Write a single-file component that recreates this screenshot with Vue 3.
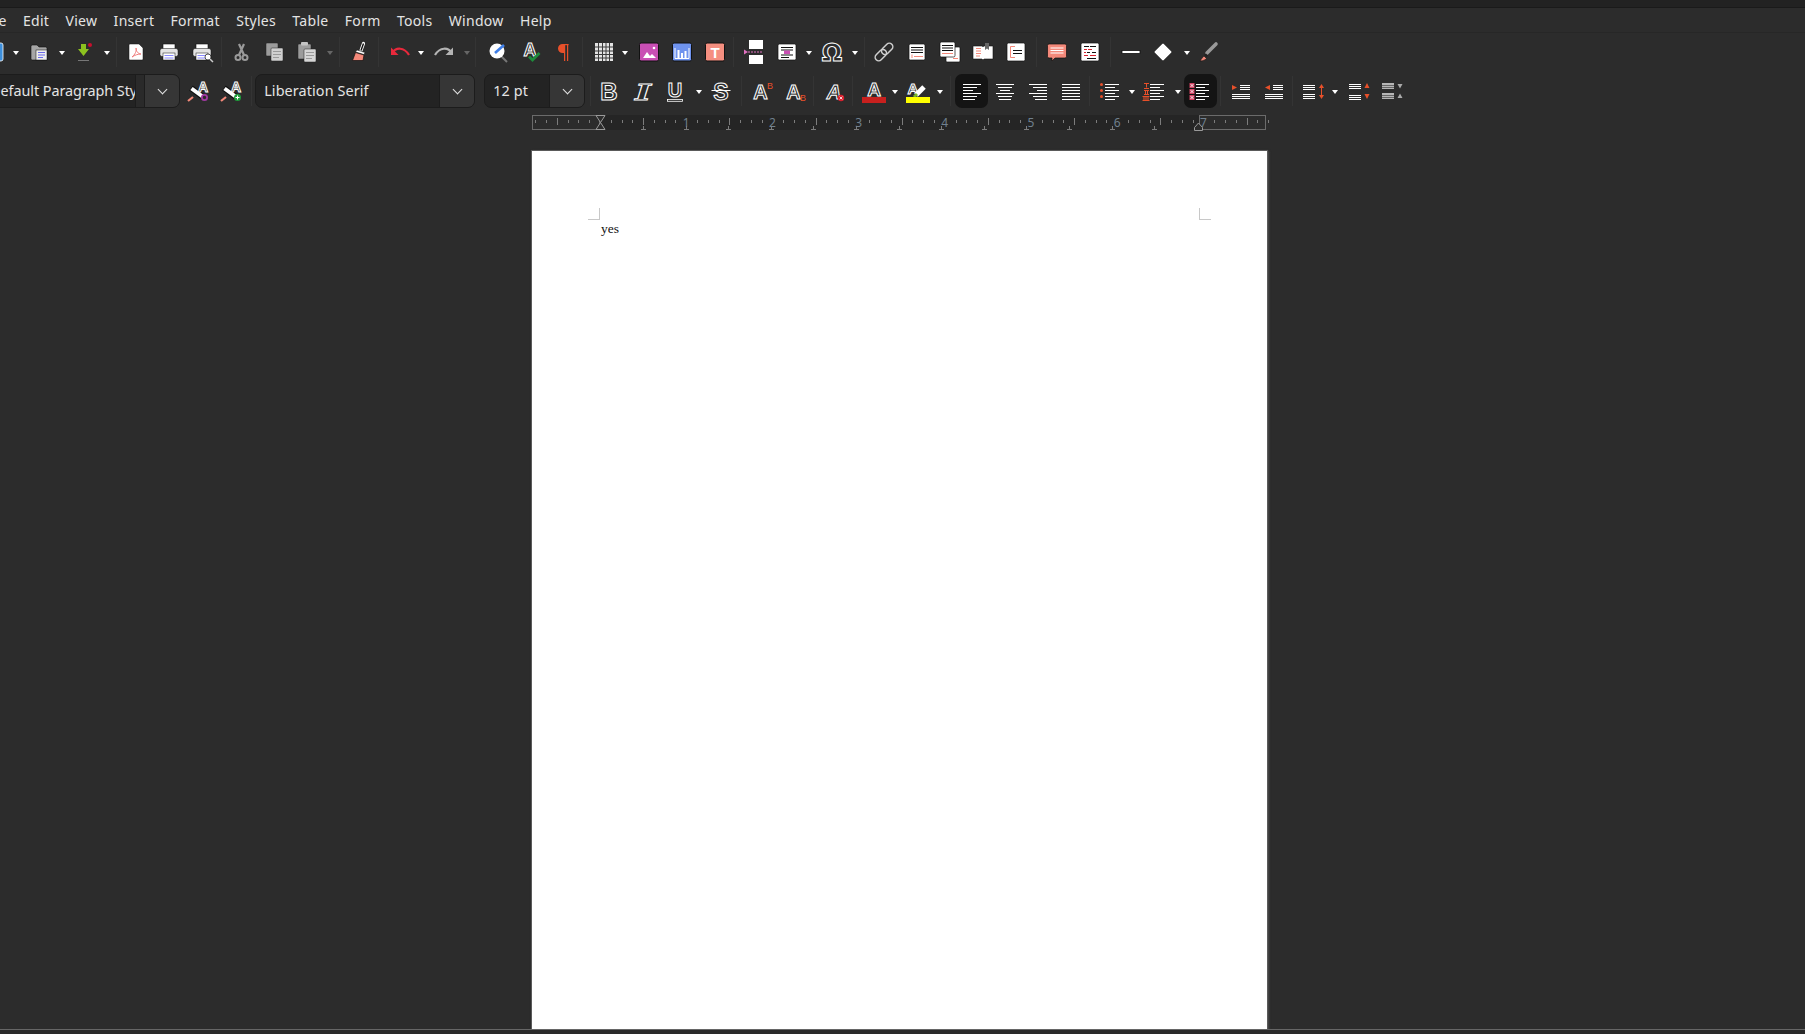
<script setup>
const menus = ['File', 'Edit', 'View', 'Insert', 'Format', 'Styles', 'Table', 'Form', 'Tools', 'Window', 'Help']

const row1 = ['save', 'dd', 'open', 'dd', 'download', 'dd', 'sep', 'pdf', 'print', 'preview', 'sep', 'cut', 'copy', 'paste', 'dim', 'sep', 'clone', 'sep', 'undo', 'dd', 'redo', 'dim', 'sep', 'find', 'spell', 'pilcrow', 'sepw', 'table', 'dd', 'image', 'chart', 'textbox', 'sep', 'pagebreak', 'field', 'dd', 'omega', 'dd', 'sep', 'link', 'footnote', 'endnote', 'bookmark', 'crossref', 'sepw', 'comment', 'track', 'sepw', 'line', 'diamond', 'dd', 'brush']
const row2a = ['updatestyle', 'newstyle', 'sep']
const row2b = ['sep', 'bold', 'italic', 'underline', 'dd', 'strike', 'sep', 'sup', 'sub', 'sep', 'clear', 'sep', 'fontcolor', 'dd', 'highlight', 'dd', 'sepw', 'alignleft', 'aligncenter', 'alignright', 'justify', 'sep', 'bullets', 'dd', 'numbers', 'dd', 'checklist', 'sep', 'indent', 'outdent', 'sep', 'spacing', 'dd', 'parainc', 'paradec']
const activeItems = ['alignleft', 'checklist']

// small helpers for building the toolbar svg strings
const bars = (list, color = '#fff', h = 1) =>
  list.map(([x, y, w]) => `<rect x="${x}" y="${y}" width="${w}" height="${h}" fill="${color}"/>`).join('')
const letter = (ch, x, y, size, extra = '') =>
  `<text x="${x}" y="${y}" text-anchor="middle" font-family="Liberation Sans" font-weight="700" font-size="${size}" fill="#2c2c2c" stroke="#fff" stroke-width="1" ${extra}>${ch}</text>`
const sheet = (x, y, w, h) =>
  `<rect x="${x}" y="${y}" width="${w}" height="${h}" rx="1.5" fill="#fff" stroke="#111" stroke-width=".7"/>`
const printer = `<rect x="6" y="4" width="12" height="6" fill="#fff" stroke="#111" stroke-width=".6"/><rect x="3" y="8.5" width="18" height="8" rx="2" fill="#e4e4e4" stroke="#111" stroke-width=".5"/><rect x="6" y="13" width="12" height="7" fill="#fff" stroke="#111" stroke-width=".5"/>` + bars([[7.5, 15, 9], [7.5, 17.5, 9]], '#8a8aff')
const roller = `<path d="M4 9l12 9" stroke="#111" stroke-width="6"/><path d="M4.5 9.5l11 8" stroke="#fff" stroke-width="4"/><path d="M1 22l5-4" stroke="#f4897a" stroke-width="2.2"/>` + letter('A', 16, 13, 14)
const textLines = bars([[3, 15, 18], [3, 17, 18], [3, 19, 18], [11, 6, 10], [11, 8, 10], [11, 10, 10]])

const icons = {
  save: `<rect x="3" y="3" width="19" height="18" rx="2" fill="#3d8fdc" stroke="#fff" stroke-width=".8"/>`,
  open: `<path d="M4 6.5A1.5 1.5 0 0 1 5.5 5H10l2 2h6.5A1.5 1.5 0 0 1 20 8.500V20H5.500A1.500 1.500 0 0 1 4 18.500z" fill="#a6a6a6" stroke="#111" stroke-width=".6"/><rect x="9" y="10" width="11" height="10" fill="#eee" stroke="#111" stroke-width=".5"/>` + bars([[11, 12, 7], [11, 14.500, 7], [11, 17, 5]], '#6a6ae8'),
  download: `<path d="M9 4h5v5h3l-5.500 7L6 9h3z" fill="#8dc21f"/><rect x="6" y="20" width="11" height="1" fill="#777"/><circle cx="18" cy="5" r="2" fill="#c8102e"/>`,
  pdf: `<path d="M5 5a1 1 0 0 1 1-1h9l4 4v11a1 1 0 0 1-1 1H6a1 1 0 0 1-1-1z" fill="#fff" stroke="#111" stroke-width=".5"/><path d="M8 17c3-2 5-7 4-9 0 3 2 6 5 6-3 0-6 1-9 3z" fill="none" stroke="#f08080"/>`,
  print: printer,
  preview: printer + `<circle cx="18" cy="17" r="3" fill="#fff" stroke="#111" stroke-width=".7"/><path d="M20 19l3 3" stroke="#ccc" stroke-width="1.500"/>`,
  cut: `<circle cx="9" cy="17.500" r="2.500" fill="none" stroke="#9a9a9a" stroke-width="2"/><circle cx="16" cy="17.500" r="2.500" fill="none" stroke="#9a9a9a" stroke-width="2"/><path d="M15 4l-5 11M10 4l5 11" stroke="#9a9a9a" stroke-width="2.200"/>`,
  copy: `<rect x="4" y="3" width="12" height="13" rx="1" fill="#9c9c9c" stroke="#222" stroke-width=".5"/><rect x="9" y="8" width="12" height="13" rx="1" fill="#d0d0d0" stroke="#222" stroke-width=".5"/>` + bars([[11, 11, 8], [11, 14, 8], [11, 17, 6]], '#999'),
  paste: `<rect x="3" y="4" width="13" height="15" rx="1" fill="#9c9c9c" stroke="#222" stroke-width=".5"/><rect x="6" y="2" width="7" height="3.500" rx="1" fill="#c4c4c4"/><rect x="9" y="9" width="12" height="13" rx="1" fill="#d6d6d6" stroke="#222" stroke-width=".5"/>` + bars([[11, 12, 8], [11, 15, 8], [11, 18, 6]], '#999'),
  clone: `<path d="M16.500 3.500l-2.500 7" stroke="#fff" stroke-width="3.200" stroke-linecap="round"/><path d="M16.500 3.500l-2.500 7" stroke="#111" stroke-width="1.400"/><path d="M10 10l8 2.500-1 2-8.500-2.500z" fill="#fff" stroke="#111" stroke-width=".5"/><path d="M8.500 12.500l8.500 2.500-1 5.500H5.500z" fill="#f4897a" stroke="#111" stroke-width=".7"/>`,
  undo: `<path d="M4 13c4-6 12-6 17 2" fill="none" stroke="#e8293c" stroke-width="2.200"/><path d="M3 7.500V15h7.500z" fill="#e8293c"/>`,
  redo: `<path d="M20 13c-4-6-12-6-17 2" fill="none" stroke="#b4b4b4" stroke-width="2.200"/><path d="M21 7.500V15h-7.500z" fill="#b4b4b4"/>`,
  find: `<path d="M15 16l6 6" stroke="#777" stroke-width="2"/><circle cx="11" cy="11" r="7.500" fill="#fff"/><path d="M9 13l9-8" stroke="#3f7fe8" stroke-width="2.600"/>`,
  spell: letter('A', 11, 16, 18) + `<path d="M10 16.500l3.500 3.500 7-7" fill="none" stroke="#1e8a3c" stroke-width="2.800"/>`,
  pilcrow: `<path d="M12 4h-1.500a4.500 4.500 0 0 0 0 9H12z" fill="#e8502a"/><rect x="11.500" y="4" width="5" height="1.200" fill="#e8502a"/><rect x="12" y="4" width="1.200" height="17" fill="#e8502a"/><rect x="15" y="4" width="1.200" height="17" fill="#e8502a"/>`,
  table: `<rect x="3" y="3" width="18" height="18" fill="#e4e4e4"/>` + bars([[3, 6.500, 18], [3, 10.500, 18], [3, 14, 18], [3, 17.500, 18]], '#3a3a3a') + `<path d="M6.500 3v18M10.500 3v18M14 3v18M17.500 3v18" stroke="#3a3a3a"/>`,
  image: `<rect x="2.500" y="3" width="19" height="18" rx="1.500" fill="#c94fb4" stroke="#111"/><path d="M6 18l4-6 3 4 2-2 4 4z" fill="#fff"/><circle cx="17" cy="8" r="1.300" fill="#fff"/>`,
  chart: `<rect x="2.500" y="3" width="19" height="18" rx="1.500" fill="#6f93ee" stroke="#111"/><path d="M5 8V18.500H19V8" fill="none" stroke="#fff"/><rect x="7.500" y="10" width="2" height="8" fill="#fff"/><rect x="11" y="13" width="2" height="5" fill="#fff"/><rect x="14.500" y="11" width="2" height="7" fill="#fff"/>`,
  textbox: `<rect x="2.500" y="3" width="19" height="18" rx="1.500" fill="#f58f80" stroke="#111"/><text x="12" y="17.500" text-anchor="middle" font-family="Liberation Sans" font-weight="700" font-size="15" fill="#fff">T</text>`,
  pagebreak: `<rect x="8" y="0" width="14" height="9" fill="#fff"/><rect x="8" y="15" width="14" height="9" fill="#fff"/><path d="M7 12h15" stroke="#e070c0" stroke-dasharray="2 1"/><path d="M3 9.500v5l4-2.500z" fill="#e070c0"/>`,
  field: sheet(3, 4, 18, 16) + bars([[6, 7, 12], [6, 9.500, 12], [6, 14.500, 12], [6, 17, 8]], '#111') + `<rect x="9" y="10.500" width="6" height="3.500" fill="#c94fb4"/>`,
  omega: `<text x="12" y="20.500" text-anchor="middle" font-family="DejaVu Sans" font-weight="700" font-size="24" fill="#2c2c2c" stroke="#fff" stroke-width="1">Ω</text>`,
  link: `<g transform="rotate(-45 12 12)" fill="none" stroke="#cfcfcf" stroke-width="1.500"><rect x="1" y="8.500" width="13" height="7" rx="3.500"/><rect x="10" y="8.500" width="13" height="7" rx="3.500"/></g>`,
  footnote: sheet(4, 4, 16, 16) + bars([[6, 7, 12], [6, 9.500, 12], [6, 12, 12]], '#111') + bars([[9, 16, 9]], '#f4897a') + bars([[6.500, 14.500, 1]], '#f4897a', 3.500),
  endnote: `<rect x="8" y="7" width="14" height="15" rx="1" fill="#fff" stroke="#111" stroke-width=".7"/>` + bars([[15, 18, 5]], '#f4897a') + sheet(2, 2, 15, 15) + bars([[4, 5, 11], [4, 7.500, 11], [4, 10, 11]], '#111') + bars([[4, 13, 11]], '#f4897a'),
  bookmark: `<path d="M2 6h9.500l.5 1 .5-1H22v13H13l-1 1-1-1H2z" fill="#fff" stroke="#111" stroke-width=".6"/><path d="M14 3h4v7l-2-1.500-2 1.500z" fill="#666"/>` + bars([[5, 8, 5], [5, 10.500, 5], [5, 13, 5], [5, 15.500, 4]], '#f4897a'),
  crossref: sheet(3, 3, 18, 18) + `<path d="M11 6.500H6.500v11H11" fill="none" stroke="#f4897a"/>` + bars([[9, 10, 9], [9, 13, 9]], '#111'),
  comment: `<path d="M4 4h16a1.500 1.500 0 0 1 1.500 1.500v11A1.500 1.500 0 0 1 20 18H10l-3 3v-3H4a1.500 1.500 0 0 1-1.500-1.500v-11A1.500 1.500 0 0 1 4 4z" fill="#f4897a" stroke="#111" stroke-width=".7"/>` + bars([[5.500, 7.500, 13], [5.500, 10, 13], [5.500, 12.500, 13]]),
  track: sheet(3, 3, 18, 18) + bars([[6, 6, 5], [12, 6, 6], [9, 12, 3], [14, 12, 4], [9, 18, 9]], '#111') + bars([[6, 9, 3], [10, 9, 4], [6, 12, 2], [6, 15, 4], [12, 15, 6]], '#d8202e'),
  line: `<rect x="3" y="10.500" width="18" height="3" fill="#fff" stroke="#111" stroke-width=".8"/>`,
  diamond: `<rect x="5.500" y="5.500" width="13" height="13" rx="1" fill="#fff" stroke="#111" stroke-width=".6" transform="rotate(45 12 12)"/>`,
  brush: `<path d="M11 13L20 4" stroke="#9a9a9a" stroke-width="3.600" stroke-linecap="round"/><path d="M4 21c2-3 3-4 4-5l2.500 2.500c-1 1-3 2.500-6.500 2.500z" fill="#f4897a" stroke="#111" stroke-width=".6"/><path d="M8 15l2.500 2.500 1.500-2-2-2z" fill="#222"/>`,

  updatestyle: roller + `<circle cx="17.500" cy="18.500" r="2.600" fill="none" stroke="#a03aa0" stroke-width="1.800"/>`,
  newstyle: roller + `<circle cx="17.500" cy="18.500" r="3.500" fill="#1e9e3c"/><path d="M15.500 18.500h4M17.500 16.500v4" stroke="#fff"/>`,
  bold: letter('B', 12, 21, 24),
  italic: `<text transform="translate(12 21) scale(1.500 1)" text-anchor="middle" font-family="DejaVu Serif" font-style="italic" font-weight="700" font-size="23" fill="#2c2c2c" stroke="#fff" stroke-width=".8">I</text>`,
  underline: letter('U', 12, 18, 20) + `<rect x="4.500" y="20.500" width="15" height="1.800" fill="#2c2c2c" stroke="#fff" stroke-width=".8"/>`,
  strike: letter('S', 12, 20.500, 23) + `<rect x="2.500" y="11" width="19" height="1" fill="#fff"/>`,
  sup: letter('A', 10.500, 20, 20) + `<text x="20" y="10" text-anchor="middle" font-family="Liberation Sans" font-size="9" fill="#e8502a">B</text>`,
  sub: letter('A', 9.500, 20, 20) + `<text x="19" y="22" text-anchor="middle" font-family="Liberation Sans" font-size="9" fill="#e8502a">B</text>`,
  clear: `<text x="11" y="20" text-anchor="middle" font-family="Liberation Sans" font-style="italic" font-weight="700" font-size="20" fill="#2c2c2c" stroke="#fff" stroke-width="1">A</text><circle cx="18" cy="19" r="3.200" fill="#d8202e"/><path d="M16.600 17.600l2.800 2.800M19.400 17.600l-2.800 2.800" stroke="#fff" stroke-width=".8"/>`,
  fontcolor: letter('A', 12, 17, 19) + `<rect x="0" y="18" width="24" height="6" fill="#c8201e"/>`,
  highlight: letter('A', 7, 15, 15) + `<path d="M10 16l8-8" stroke="#fff" stroke-width="5"/><path d="M8 18l3-3" stroke="#78b42a" stroke-width="3"/><rect x="0" y="18" width="24" height="6" fill="#ffff00"/>`,
  alignleft: bars([[4, 5, 18], [4, 8, 14], [4, 11, 10], [4, 14, 18], [4, 17, 14], [4, 20, 12]]),
  aligncenter: bars([[4, 5, 18], [6, 8, 14], [8, 11, 10], [4, 14, 18], [6, 17, 14], [7, 20, 12]]),
  alignright: bars([[4, 5, 18], [8, 8, 14], [12, 11, 10], [4, 14, 18], [8, 17, 14], [10, 20, 12]]),
  justify: bars([[4, 5, 18], [4, 8, 18], [4, 11, 18], [4, 14, 18], [4, 17, 18], [4, 20, 18]]),
  bullets: bars([[8, 5, 14], [8, 8, 10], [8, 11, 14], [8, 14, 10], [8, 17, 14], [8, 20, 10]]) + [5, 11, 17].map((y) => `<circle cx="4.500" cy="${y + .5}" r="1.500" fill="#e8502a"/>`).join(''),
  numbers: bars([[9, 5, 14], [9, 8, 10], [9, 11, 14], [9, 14, 10], [9, 17, 14], [9, 20, 10]]) +
    bars([[3, 4, 5], [3, 9, 5], [3, 11, 5], [3, 15, 5], [1.500, 17, 7], [1.500, 21, 7]], '#e8502a') +
    bars([[5, 4, 1], [4, 11, 1], [6, 11, 1], [2.500, 17, 1], [4.500, 17, 1], [6.500, 17, 1]], '#e8502a', 4.500),
  checklist: bars([[9, 5, 13], [9, 8, 9], [9, 11, 13], [9, 14, 9], [9, 17, 13], [9, 20, 9]]) +
    [4, 10, 16].map((y) => `<rect x="2.500" y="${y}" width="5" height="5" fill="#d04060"/><path d="M3.500 ${y + 1}l3 3m0-3l-3 3" stroke="#fff" stroke-width=".8"/>`).join(''),
  indent: `<path d="M3 6v5l5-2.500z" fill="#e8502a"/>` + textLines,
  outdent: `<path d="M8 6v5L3 8.500z" fill="#e8502a"/>` + textLines,
  spacing: bars([[2, 6, 12], [2, 8, 12], [2, 10, 12], [2, 15, 12], [2, 17, 12], [2, 19, 12]]) + `<path d="M20.500 7v11" stroke="#e8502a"/><path d="M18 9l2.500-4 2.500 4zM18 16l2.500 4 2.500-4z" fill="#e8502a"/>`,
  parainc: bars([[3, 5, 12], [3, 7, 12], [3, 9, 12], [3, 16, 12], [3, 18, 12], [3, 20, 12]]) + `<path d="M18.500 9l2.500-5 2.500 5zM18.500 15l2.500 5 2.500-5z" fill="#e8502a"/>`,
  paradec: `<rect x="3" y="4" width="12" height="6" fill="#b5b5b5"/><rect x="3" y="14" width="12" height="6" fill="#b5b5b5"/>` + bars([[3, 6, 12], [3, 8, 12], [3, 16, 12], [3, 18, 12]], '#666') + `<path d="M18.500 5h5L21 9.500zM18.500 19h5L21 14.500z" fill="#aaa"/>`,
}

// nudges so a few asymmetric icons sit where the reference has them
const nudges = {
  find: 3, spell: 3, pilcrow: 2, undo: 2, table: 1, image: 1, chart: 1, textbox: 1, diamond: -2, brush: -2,
  bold: -1, underline: -1, strike: -1, sup: 1, sub: 2, clear: 2, fontcolor: 2, highlight: 1,
  numbers: -2, checklist: -2, indent: 1, outdent: 1, spacing: 1, parainc: 0, paradec: 0,
}
for (const [name, dx] of Object.entries(nudges)) {
  icons[name] = `<g transform="translate(${dx} 0)">${icons[name]}</g>`
}

// ruler ticks: page zero sits at x=68 inside the ruler, one inch is 86.2px
const inch = 86.2
const ticks = []
for (let k = -6; k <= 62; k++) {
  if (k % 8 === 0) continue
  ticks.push({ x: 68 + (k * inch) / 8, long: k % 4 === 0 })
}
const tabs = Array.from({ length: 13 }, (_, i) => 68.4 + 42.6 * (i + 1))
const numbers = [1, 2, 3, 4, 5, 6, 7].map((n) => ({ n, x: 68 + n * inch }))
</script>

<template>
  <div class="writer">
    <div class="titlestrip"></div>

    <nav class="menubar">
      <span v-for="m in menus" :key="m">{{ m }}</span>
    </nav>

    <div class="toolbar row1">
      <template v-for="(it, i) in row1" :key="i">
        <span v-if="it === 'sep' || it === 'sepw'" class="sep" :class="{ wide: it === 'sepw' }"></span>
        <span v-else-if="it === 'dd' || it === 'dim'" class="dd" :class="{ dim: it === 'dim' }"></span>
        <span v-else class="btn"><svg viewBox="0 0 24 24" width="24" height="24" v-html="icons[it]"></svg></span>
      </template>
    </div>

    <div class="toolbar row2">
      <div class="combo style-combo">
        <span class="combo-text">Default Paragraph Style</span>
        <span class="combo-gap"></span>
        <span class="combo-btn"><i class="chev"></i></span>
      </div>
      <template v-for="(it, i) in row2a" :key="i">
        <span v-if="it === 'sep'" class="sep"></span>
        <span v-else class="btn"><svg viewBox="0 0 24 24" width="24" height="24" v-html="icons[it]"></svg></span>
      </template>
      <div class="combo font-combo">
        <span class="combo-text">Liberation Serif</span>
        <span class="combo-btn"><i class="chev"></i></span>
      </div>
      <div class="combo size-combo">
        <span class="combo-text">12 pt</span>
        <span class="combo-btn"><i class="chev"></i></span>
      </div>
      <template v-for="(it, i) in row2b" :key="i">
        <span v-if="it === 'sep' || it === 'sepw'" class="sep" :class="{ wide: it === 'sepw' }"></span>
        <span v-else-if="it === 'dd'" class="dd"></span>
        <span v-else class="btn" :class="{ active: activeItems.includes(it) }"><svg viewBox="0 0 24 24" width="24" height="24" v-html="icons[it]"></svg></span>
      </template>
    </div>

    <div class="ruler-row">
      <svg class="ruler" viewBox="0 0 735 17" width="735" height="17">
        <rect x="68" y="0" width="600" height="15" fill="#252525" />
        <rect x="0.5" y="0.5" width="67" height="14" fill="none" stroke="#6b6b6b" />
        <rect x="667.5" y="0.5" width="66" height="14" fill="none" stroke="#6b6b6b" />
        <rect
          v-for="t in ticks"
          :key="t.x"
          :x="Math.round(t.x)"
          :y="t.long ? 3 : 5"
          width="1"
          :height="t.long ? 7 : 3"
          fill="#7c7c7c"
        />
        <path v-for="x in tabs" :key="x" :d="`M${Math.round(x)}.5 11v3M${Math.round(x) - 2} 14.500h5`" stroke="#7c7c7c" fill="none" />
        <text v-for="n in numbers" :key="n.n" :x="n.x" y="11.500" text-anchor="middle" class="ruler-num">{{ n.n }}</text>
        <path d="M64 0.500h9l-4.500 7 4.500 7h-9l4.500-7z" fill="#2c2c2c" stroke="#9a9a9a" />
        <path d="M662.500 15.500v-3l4-4.500 4 4.500v3z" fill="#2c2c2c" stroke="#9a9a9a" />
      </svg>
    </div>

    <main class="workspace">
      <div class="page">
        <div class="crop-row">
          <span class="crop left"></span>
          <span class="crop right"></span>
        </div>
        <p class="body-text">yes</p>
      </div>
    </main>

    <div class="statusstrip"></div>
  </div>
</template>

<style scoped>
.writer {
  height: 1034px;
  width: 1805px;
  display: flex;
  flex-direction: column;
  overflow: hidden;
  background: #2c2c2c;
  font-family: "Noto Sans", "Open Sans", sans-serif;
  color: #e4e4e4;
}

.titlestrip {
  height: 7px;
  flex: none;
  background: #222;
  border-bottom: 1px solid #1a1a1a;
}

.menubar {
  height: 24px;
  flex: none;
  display: flex;
  align-items: center;
  gap: 16.3px;
  margin-left: -17px;
  font-size: 14px;
  letter-spacing: 0.3px;
  white-space: nowrap;
  border-bottom: 1px solid #272727;
}

.toolbar {
  display: flex;
  align-items: center;
  flex: none;
}

.row1 {
  height: 38px;
  margin-left: -23.35px;
}

.row2 {
  height: 34px;
  margin-top: 3px;
  margin-left: -19px;
}

.btn {
  width: 33.1px;
  height: 34px;
  flex: none;
  display: flex;
  align-items: center;
  justify-content: center;
  border-radius: 7px;
}

.btn svg {
  overflow: visible;
}

.btn.active {
  background: #141414;
}

.dd {
  width: 12.5px;
  height: 34px;
  flex: none;
  display: flex;
  align-items: center;
  justify-content: center;
}

.dd::after {
  content: "";
  margin-top: 2px;
  border-left: 3.5px solid transparent;
  border-right: 3.5px solid transparent;
  border-top: 4px solid #fff;
}

.dd.dim::after {
  border-top-color: #666;
}

.sep {
  width: 6px;
  height: 30px;
  flex: none;
  display: flex;
  justify-content: center;
}

.sep.wide {
  width: 8px;
}

.sep::after {
  content: "";
  width: 1px;
  background: #343434;
}

.combo {
  height: 34px;
  flex: none;
  box-sizing: border-box;
  display: flex;
  background: #232323;
  border: 1px solid #1c1c1c;
  border-radius: 7px;
  overflow: hidden;
  font-size: 14.4px;
  line-height: 32px;
}

.combo-text {
  flex: 1;
  min-width: 0;
  padding-left: 8px;
  white-space: nowrap;
  overflow: hidden;
  letter-spacing: 0.1px;
}

.style-combo .combo-text {
  letter-spacing: -0.05px;
}

.combo-gap {
  width: 8px;
  flex: none;
  background: #2a2a2a;
  border-left: 1px solid #1c1c1c;
}

.combo-btn {
  width: 34px;
  flex: none;
  display: flex;
  align-items: center;
  justify-content: center;
  background: #363636;
  border-left: 1px solid #1c1c1c;
}

.chev {
  width: 6px;
  height: 6px;
  margin-top: -3px;
  border-right: 1.3px solid #e4e4e4;
  border-bottom: 1.3px solid #e4e4e4;
  transform: rotate(45deg);
}

.style-combo {
  width: 199px;
  margin-right: 2px;
}

.font-combo {
  width: 220px;
  margin-left: 1px;
}

.size-combo {
  width: 101px;
  margin-left: 9px;
  margin-right: 2px;
}

.ruler-row {
  flex: none;
  height: 17px;
  margin-top: 7px;
  padding-left: 532px;
}

.ruler {
  display: block;
  overflow: visible;
}

.ruler-num {
  font-size: 12px;
  fill: #70808e;
}

.workspace {
  flex: 1;
  min-height: 0;
  padding: 19px 0 0 532px;
  overflow: hidden;
}

.page {
  width: 735px;
  height: 900px;
  padding-top: 57px;
  box-sizing: border-box;
  background: #fff;
  box-shadow: 0 0 0 1px #5a5a5a, 1px 1px 2px 1px #4c4c4c;
}

.crop-row {
  display: flex;
  justify-content: space-between;
  padding: 0 56px;
}

.crop {
  width: 12px;
  height: 12px;
  box-sizing: border-box;
  border-bottom: 1px solid #c8c8c8;
}

.crop.left {
  border-right: 1px solid #c8c8c8;
}

.crop.right {
  border-left: 1px solid #c8c8c8;
}

.body-text {
  margin: -1px 0 0;
  padding-left: 69px;
  font-family: "Liberation Serif", serif;
  font-size: 13.5px;
  line-height: 20px;
  color: #111;
}

.statusstrip {
  height: 4px;
  flex: none;
  background: #2a2a2a;
  border-top: 1px solid #666;
}
</style>

<style>
html,
body {
  background: #2c2c2c;
  overflow: hidden;
}
</style>
